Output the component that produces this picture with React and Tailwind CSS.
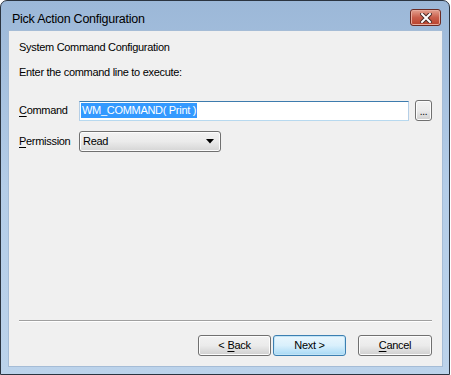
import React from "react";

const font = { fontFamily: '"Liberation Sans", Arial, sans-serif' };

function Btn({ children, primary, className = "" }) {
  return (
    <div
      className={`flex h-[21px] items-center justify-center rounded-[3px] border text-black ${
        primary
          ? "border-[#3c7fb1] bg-gradient-to-b from-[#eaf6fd] via-[#d9f0fc] to-[#a7d9f5] shadow-[inset_0_0_0_1px_#c2e4f6]"
          : "border-[#707070] bg-gradient-to-b from-[#f2f2f2] via-[#ebebeb] to-[#cfcfcf] shadow-[inset_0_0_0_1px_#fcfcfc]"
      } ${className}`}
    >
      {children}
    </div>
  );
}

export default function App() {
  return (
    <div className="h-[375px] w-[451px] bg-white" style={font}>
      <div className="flex h-[375px] w-[450px] flex-col rounded-t-[7px] border border-[#2b3440] bg-gradient-to-b from-[#9cb8d8] via-[#b4cde8] to-[#bcd3eb]">
        {/* title bar */}
        <div className="flex h-[29px] shrink-0 items-start justify-between pl-[11px] pr-[8px]">
          <span className="pt-[10px] text-[12.5px] leading-[16px] tracking-[-0.25px] text-black">
            Pick Action Configuration
          </span>
          <div className="mt-[8px] flex h-[17px] w-[31px] items-center justify-center rounded-[3px] border border-[#6b2b24] bg-gradient-to-b from-[#e3a190] via-[#c95e4b] to-[#b8412c] shadow-[inset_0_0_0_1px_#e8aa9c]">
            <svg width="12" height="10" viewBox="0 0 12 10">
              <path d="M2 1 L10 9 M10 1 L2 9" stroke="#4a2a26" strokeWidth="4" strokeLinecap="square" />
              <path d="M2 1 L10 9 M10 1 L2 9" stroke="#ffffff" strokeWidth="2" strokeLinecap="square" />
            </svg>
          </div>
        </div>

        {/* client area */}
        <div className="mb-[7px] ml-[7px] mr-[6px] flex flex-1 flex-col border border-[#a5bcd6] bg-[#f0f0f0] px-[10px] text-[11px] leading-[15px] tracking-[-0.3px] text-black">
          <div className="mt-[9px]">System Command Configuration</div>
          <div className="mt-[10px]">Enter the command line to execute:</div>

          <div className="mt-[20px] flex items-center">
            <span className="w-[60px]">
              <span className="underline underline-offset-2">C</span>ommand
            </span>
            <div className="flex h-[20px] w-[330px] items-center border border-[#3d7bad] border-b-[#b7d9ef] border-l-[#b5cfe7] border-r-[#b5cfe7] bg-white px-[1px]">
              <span className="bg-[#3399ff] px-[1px] leading-[15px] text-white">WM_COMMAND( Print )</span>
            </div>
            <Btn className="ml-[6px] h-[17px] w-[17px] text-[10px] leading-none">
              <span className="mt-[2px]">...</span>
            </Btn>
          </div>

          <div className="mt-[10px] flex items-center">
            <span className="w-[60px]">
              <span className="underline underline-offset-2">P</span>ermission
            </span>
            <div className="flex h-[21px] w-[142px] items-center justify-between rounded-[3px] border border-[#707070] bg-gradient-to-b from-[#f2f2f2] via-[#ebebeb] to-[#d5d5d5] pl-[3px] pr-[6px] shadow-[inset_0_0_0_1px_#fcfcfc]">
              <span>Read</span>
              <svg width="8" height="5" viewBox="0 0 8 5">
                <path d="M0 0 H8 L4 4.5 Z" fill="#000" />
              </svg>
            </div>
          </div>

          <div className="flex-1" />

          <div className="border-t border-[#a0a0a0] border-b border-b-white" />

          <div className="mt-[13px] mb-[10px] flex justify-end">
            <Btn className="w-[73px]">
              &lt; <span className="ml-[3px] underline underline-offset-2">B</span>ack
            </Btn>
            <Btn primary className="ml-[2px] w-[73px]">
              Next &gt;
            </Btn>
            <Btn className="ml-[12px] w-[74px]">
              <span className="underline underline-offset-2">C</span>ancel
            </Btn>
          </div>
        </div>
      </div>
    </div>
  );
}
